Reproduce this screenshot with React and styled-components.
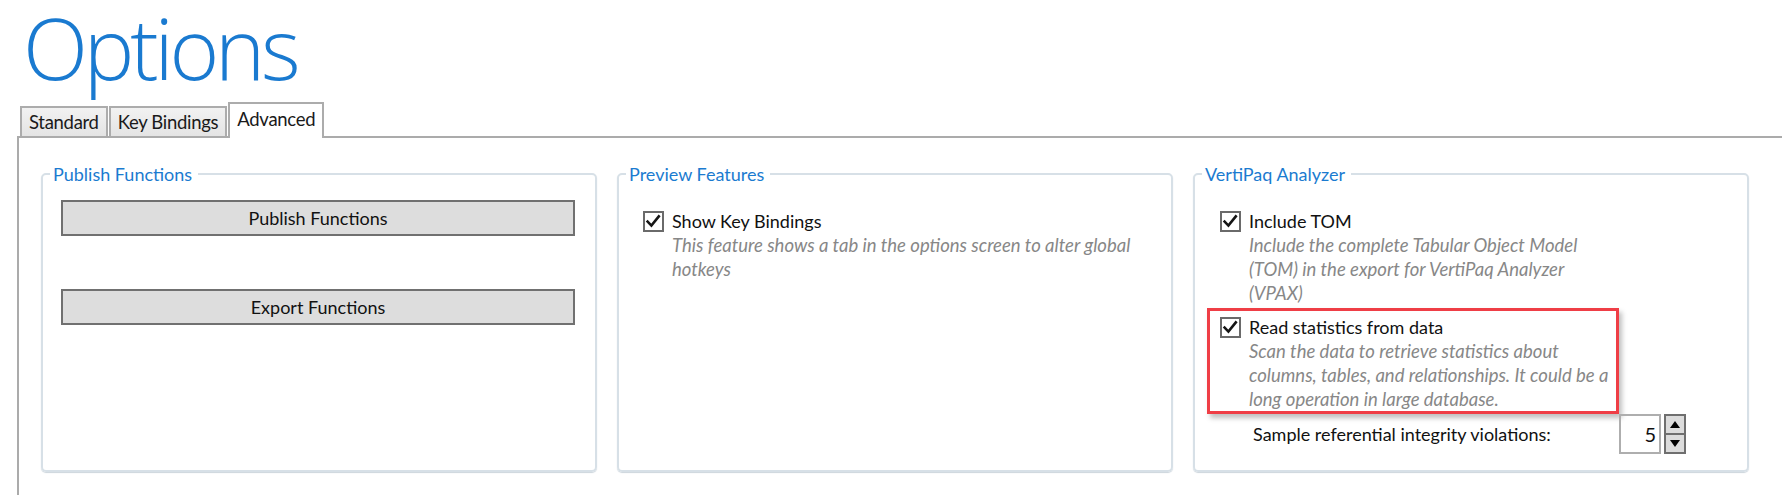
import React from 'react';
import styled, { createGlobalStyle } from 'styled-components';

const GlobalStyle = createGlobalStyle`
  html, body { margin: 0; padding: 0; background: #ffffff; }
  body {
    font-family: "Lato", "Open Sans", sans-serif;
    color: #111111;
    overflow: hidden;
  }
  * { box-sizing: border-box; }
`;

const Page = styled.div`
  width: 1782px;
  height: 495px;
  overflow: hidden;
  padding-left: 17px;
  display: flex;
  flex-direction: column;
`;

const Heading = styled.h1`
  margin: 3px 0 0 6px;
  font-family: "Open Sans", "Lato", sans-serif;
  font-weight: 300;
  font-size: 85px;
  line-height: 88px;
  letter-spacing: -4.2px;
  color: #1a7ad0;
`;

const TabStrip = styled.div`
  display: flex;
  align-items: flex-end;
  gap: 1px;
  margin: 11px 0 0 3px;
  position: relative;
  z-index: 1;
`;

const Tab = styled.div`
  display: flex;
  align-items: center;
  justify-content: center;
  padding: 0 7px;
  height: ${p => (p.$active ? '36px' : '30px')};
  margin-bottom: ${p => (p.$active ? '-2px' : '0')};
  padding-bottom: ${p => (p.$active ? '4px' : '1px')};
  border: 2px solid #acacac;
  border-bottom: 0;
  background: ${p => (p.$active ? '#ffffff' : 'linear-gradient(#f2f2f2, #e4e4e4)')};
  font-size: 18.5px;
  letter-spacing: -0.3px;
  color: #1a1a1a;
`;

const Panel = styled.div`
  flex: 1;
  border-top: 2px solid #ababab;
  border-left: 2px solid #ababab;
  padding: 24px 0 0 22px;
  display: grid;
  grid-template-columns: 556px 556px 556px;
  column-gap: 20px;
  align-content: start;
`;

const Group = styled.fieldset`
  margin: 0;
  padding: 0;
  min-width: 0;
  height: 310px;
  border: 2px solid #d7e0e7;
  border-radius: 5px;
  box-shadow: 0 1px 1px #ccd5dc;
`;

const Legend = styled.legend`
  margin-left: 7px;
  padding: 0 6px 0 3px;
  font-size: 18px;
  line-height: 24px;
  color: #1b7bd0;
`;

const GroupBody = styled.div`
  display: flex;
  flex-direction: column;
  padding: ${p => p.$pad};
`;

const ActionButton = styled.button`
  display: block;
  width: 514px;
  height: 36px;
  margin: 0 0 ${p => p.$gap || '0'} 0;
  border: 2px solid #707070;
  background: #dddddd;
  font-family: inherit;
  font-size: 18px;
  color: #111111;
  padding: 0;
`;

const Option = styled.div`
  display: flex;
  flex-direction: column;
`;

const OptionRow = styled.label`
  display: flex;
  align-items: center;
  gap: 8px;
  height: 24px;
  font-size: 18px;
  color: #111111;
`;

const Desc = styled.div`
  margin-left: 29px;
  font-style: italic;
  font-size: 18.5px;
  line-height: 24px;
  color: #878787;
  white-space: nowrap;
`;

const Highlight = styled.div`
  margin: 3px 0 0 -13px;
  width: 412px;
  padding: 4px 0 0 10px;
  border: 3px solid #ef3e46;
  box-shadow: 3px 4px 5px rgba(0, 0, 0, 0.25);
`;

const SampleRow = styled.div`
  display: flex;
  align-items: center;
  padding-left: 33px;
`;

const SampleLabel = styled.span`
  width: 366px;
  font-size: 18px;
  color: #111111;
`;

const NumberBox = styled.div`
  width: 42px;
  height: 40px;
  border: 2px solid #aeaeae;
  display: flex;
  align-items: center;
  justify-content: flex-end;
  padding-right: 3px;
  font-size: 20px;
  color: #111111;
`;

const Spinner = styled.div`
  margin-left: 3px;
  width: 22px;
  height: 40px;
  border: 2px solid #6f6f6f;
  display: flex;
  flex-direction: column;
  gap: 2px;
  background: #6f6f6f;
`;

const SpinHalf = styled.div`
  flex: 1;
  background: #dcdcdc;
  display: flex;
  align-items: center;
  justify-content: center;
`;

const CheckBox = () => (
  <svg width="21" height="21" viewBox="0 0 21 21">
    <rect x="1" y="1" width="19" height="19" fill="#ffffff" stroke="#6a6a6a" strokeWidth="2" />
    <path d="M4.6 10.6 L8.4 14.6 L15.8 5.4" fill="none" stroke="#151515" strokeWidth="2.6" strokeLinecap="square" strokeLinejoin="miter" />
  </svg>
);

const Triangle = ({ up }) => (
  <svg width="10" height="7" viewBox="0 0 10 7">
    <path d={up ? 'M0 7 L5 0 L10 7 Z' : 'M0 0 L5 7 L10 0 Z'} fill="#000000" />
  </svg>
);

const CheckOption = ({ label, lines }) => (
  <Option>
    <OptionRow>
      <CheckBox />
      {label}
    </OptionRow>
    <Desc>
      {lines.map((l, i) => (
        <div key={i}>{l}</div>
      ))}
    </Desc>
  </Option>
);

export default function App() {
  return (
    <>
      <GlobalStyle />
      <Page>
        <Heading>Options</Heading>
        <TabStrip>
          <Tab>Standard</Tab>
          <Tab>Key Bindings</Tab>
          <Tab $active>Advanced</Tab>
        </TabStrip>
        <Panel>
          <Group>
            <Legend>Publish Functions</Legend>
            <GroupBody $pad="14px 0 0 18px">
              <ActionButton $gap="53px">Publish Functions</ActionButton>
              <ActionButton>Export Functions</ActionButton>
            </GroupBody>
          </Group>
          <Group>
            <Legend>Preview Features</Legend>
            <GroupBody $pad="23px 0 0 24px">
              <CheckOption
                label="Show Key Bindings"
                lines={[
                  'This feature shows a tab in the options screen to alter global',
                  'hotkeys',
                ]}
              />
            </GroupBody>
          </Group>
          <Group>
            <Legend>VertiPaq Analyzer</Legend>
            <GroupBody $pad="23px 0 0 25px">
              <CheckOption
                label="Include TOM"
                lines={[
                  'Include the complete Tabular Object Model',
                  '(TOM) in the export for VertiPaq Analyzer',
                  '(VPAX)',
                ]}
              />
              <Highlight>
                <CheckOption
                  label="Read statistics from data"
                  lines={[
                    'Scan the data to retrieve statistics about',
                    'columns, tables, and relationships. It could be a',
                    'long operation in large database.',
                  ]}
                />
              </Highlight>
              <SampleRow>
                <SampleLabel>Sample referential integrity violations:</SampleLabel>
                <NumberBox>5</NumberBox>
                <Spinner>
                  <SpinHalf><Triangle up /></SpinHalf>
                  <SpinHalf><Triangle /></SpinHalf>
                </Spinner>
              </SampleRow>
            </GroupBody>
          </Group>
        </Panel>
      </Page>
    </>
  );
}
